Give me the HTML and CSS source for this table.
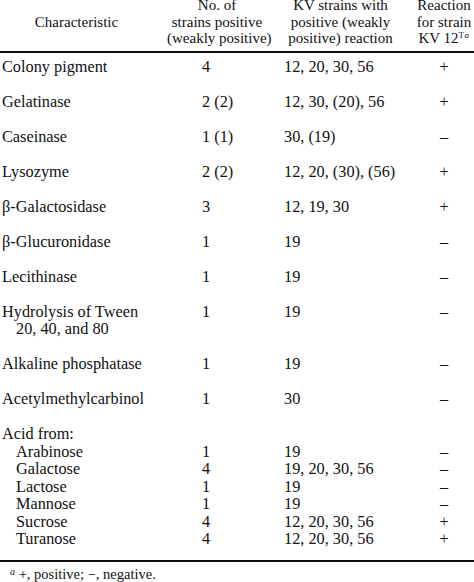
FILE: index.html
```html
<!DOCTYPE html>
<html>
<head>
<meta charset="utf-8">
<link rel="stylesheet" href="styles.css">
</head>
<body>
<div class="tbl">
  <div class="head">
    <div class="hc h1">Characteristic</div>
    <div class="hc">No. of<br>strains positive<br>(weakly positive)</div>
    <div class="hc">KV strains with<br>positive (weakly<br>positive) reaction</div>
    <div class="hc">Reaction<br>for strain<br>KV 12<sup class="sup">T<i>a</i></sup></div>
  </div>
  <div class="body">
    <div class="row"><div>Colony pigment</div><div>4</div><div>12, 20, 30, 56</div><div>+</div></div>
    <div class="row"><div>Gelatinase</div><div>2 (2)</div><div>12, 30, (20), 56</div><div>+</div></div>
    <div class="row"><div>Caseinase</div><div>1 (1)</div><div>30, (19)</div><div>–</div></div>
    <div class="row"><div>Lysozyme</div><div>2 (2)</div><div>12, 20, (30), (56)</div><div>+</div></div>
    <div class="row"><div>β-Galactosidase</div><div>3</div><div>12, 19, 30</div><div>+</div></div>
    <div class="row"><div>β-Glucuronidase</div><div>1</div><div>19</div><div>–</div></div>
    <div class="row"><div>Lecithinase</div><div>1</div><div>19</div><div>–</div></div>
    <div class="row"><div>Hydrolysis of Tween<br><span class="ind">20, 40, and 80</span></div><div>1</div><div>19</div><div>–</div></div>
    <div class="row"><div>Alkaline phosphatase</div><div>1</div><div>19</div><div>–</div></div>
    <div class="row"><div>Acetylmethylcarbinol</div><div>1</div><div>30</div><div>–</div></div>
    <div class="row grp"><div>Acid from:</div><div></div><div></div><div></div></div>
    <div class="row sub"><div><span class="ind">Arabinose</span></div><div>1</div><div>19</div><div>–</div></div>
    <div class="row sub"><div><span class="ind">Galactose</span></div><div>4</div><div>19, 20, 30, 56</div><div>–</div></div>
    <div class="row sub"><div><span class="ind">Lactose</span></div><div>1</div><div>19</div><div>–</div></div>
    <div class="row sub"><div><span class="ind">Mannose</span></div><div>1</div><div>19</div><div>–</div></div>
    <div class="row sub"><div><span class="ind">Sucrose</span></div><div>4</div><div>12, 20, 30, 56</div><div>+</div></div>
    <div class="row sub"><div><span class="ind">Turanose</span></div><div>4</div><div>12, 20, 30, 56</div><div>+</div></div>
  </div>
</div>
<p class="note"><sup class="fn"><i>a</i></sup> +, positive; −, negative.</p>
</body>
</html>
```
FILE: styles.css
```css
html, body {
  margin: 0;
  padding: 0;
  background: #ffffff;
}
body {
  width: 474px;
  height: 582px;
  overflow: hidden;
  font-family: "Liberation Serif", "Times New Roman", serif;
  color: #111111;
}
.tbl {
  width: 474px;
  margin-top: -3px;
}
.head,
.row {
  display: grid;
  grid-template-columns: 167px 100px 147px 60px;
}
.head {
  align-items: center;
  padding-bottom: 4px;
  border-bottom: 2px solid #111111;
}
.hc {
  font-size: 15px;
  line-height: 16.5px;
  text-align: center;
  white-space: nowrap;
}
.hc.h1 { padding-right: 14px; }
.sup {
  font-size: 9px;
  line-height: 0;
  vertical-align: 5px;
  letter-spacing: 0.5px;
}
.body {
  border-bottom: 2px solid #111111;
  padding-bottom: 12px;
}
.row {
  font-size: 16.3px;
  line-height: 17.5px;
  white-space: nowrap;
  padding: 5px 0 12.5px 0;
}
.row > div:nth-child(1) { padding-left: 2px; }
.row > div:nth-child(2) { padding-left: 35px; }
.row > div:nth-child(3) { padding-left: 17px; }
.row > div:nth-child(4) { text-align: center; }
.row.grp {
  padding: 5px 0 0 0;
}
.row.sub {
  padding: 0;
}
.ind {
  display: inline-block;
  padding-left: 14px;
}
.note {
  margin: 4px 0 0 0;
  padding-left: 10px;
  font-size: 14.5px;
  line-height: 16px;
}
.fn {
  font-size: 10px;
  line-height: 0;
  vertical-align: 4px;
}
```
